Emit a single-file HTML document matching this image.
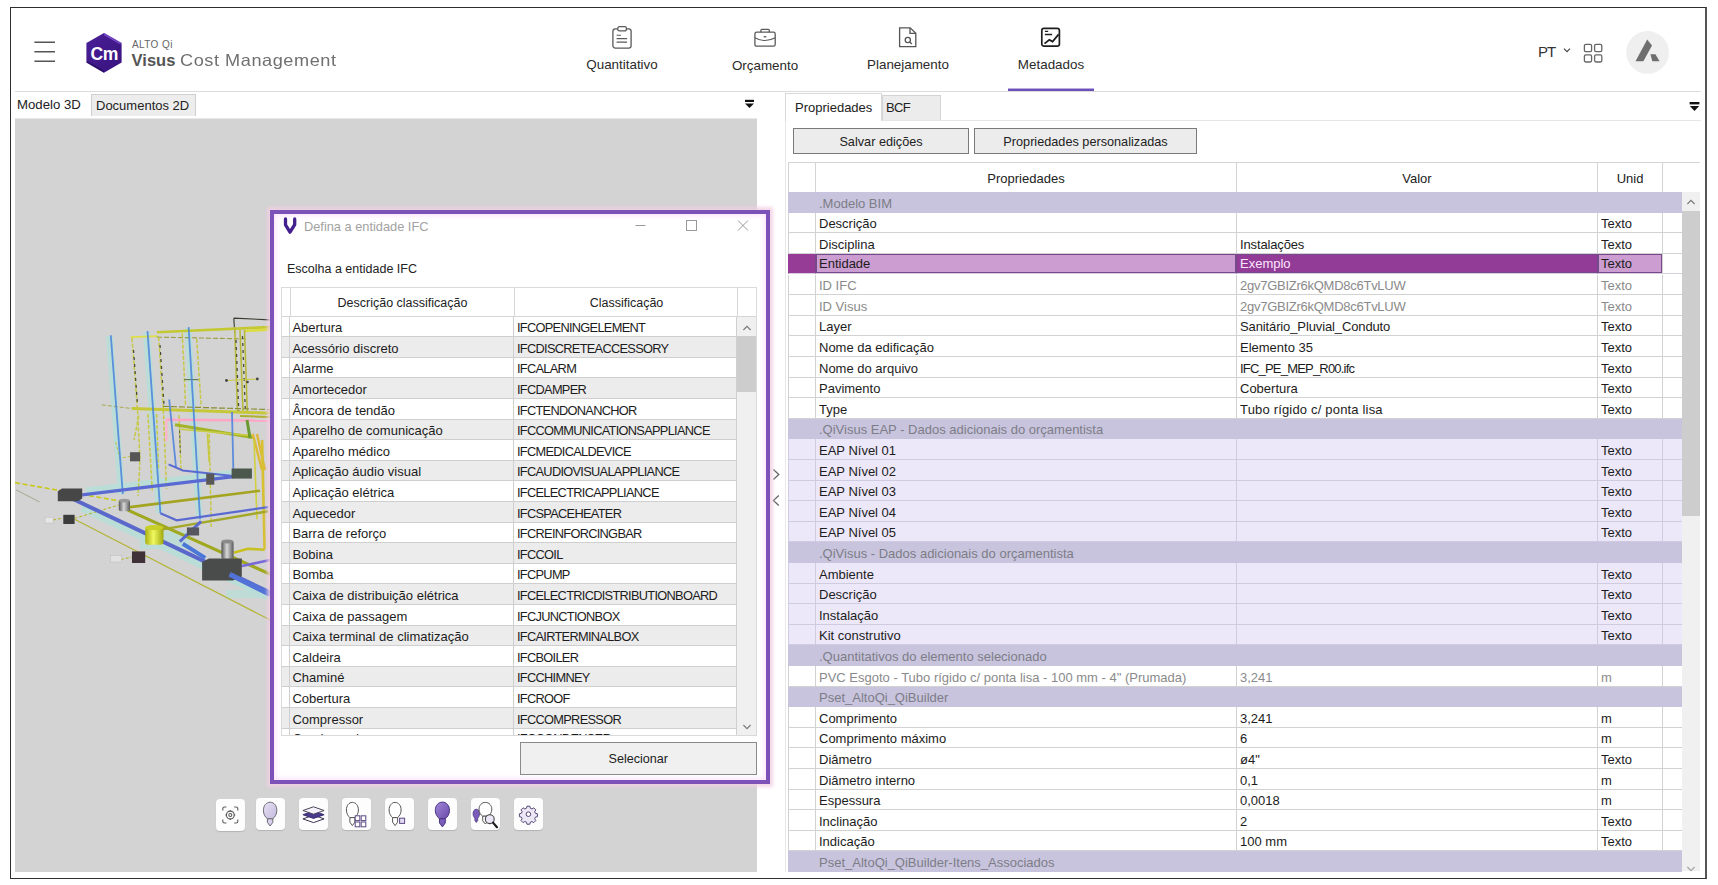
<!DOCTYPE html>
<html><head><meta charset="utf-8"><title>Visus Cost Management</title>
<style>
html,body{margin:0;padding:0;background:#fff}
body{width:1718px;height:885px;position:relative;overflow:hidden;font-family:"Liberation Sans",sans-serif;font-size:13px;color:#1c1c1c}
i{font-style:normal}
.a{position:absolute}
#frame{position:absolute;left:10px;top:7px;width:1697px;height:872px;border:1px solid #2e2e2e;border-right:2px solid #555;box-sizing:border-box;z-index:50}
/* header */
#hdrline{position:absolute;left:15px;top:91px;width:1686px;height:1px;background:#dcdcdc}
.hb{position:absolute;left:34px;width:21px;height:2px;background:#5a5a5a}
.nav{position:absolute;top:56px;height:18px;line-height:18px;font-size:13.4px;color:#2a2a2a;text-align:center;white-space:nowrap}
#navul{position:absolute;left:1008px;top:88px;width:86px;height:3px;background:linear-gradient(#b9addf 0,#b9addf 1px,#6a50b8 1px)}
/* left */
.tabtxt{position:absolute;white-space:nowrap;line-height:20px;font-size:13.2px;color:#222}
#tab2d{position:absolute;left:91px;top:94px;width:105px;height:22px;box-sizing:border-box;background:#ededed;border:1px solid #cfcfcf;border-bottom:none}
#viewer{position:absolute;left:15px;top:119px;width:742px;height:753px;box-shadow:0 -1px 0 #e9e9e9;background:#d3d3d3;overflow:hidden}
.tb{position:absolute;width:29px;height:32px;border-radius:4px;background:#fdfdfd;box-shadow:0 1px 1px rgba(0,0,0,.15)}
/* right panel */
#rpanel{position:absolute;left:0;top:0}
.btn{position:absolute;top:128px;height:26px;box-sizing:border-box;background:#ececec;border:1px solid #7a7a7a;text-align:center;line-height:27px;font-size:12.700px;color:#222;white-space:nowrap}
#ghead{position:absolute;left:788px;top:162px;width:912px;height:30px;border-top:1px solid #d4d4d4;box-sizing:border-box}
#ghead i{position:absolute;top:0;height:29px;line-height:31px;text-align:center;border-left:1px solid #d4d4d4;box-sizing:border-box;font-size:13px;color:#222}
#pgrid{position:absolute;left:0;top:0}
.r{position:absolute;left:788px;width:894px;white-space:nowrap;overflow:hidden}
.r i{position:absolute;top:0;bottom:0;box-sizing:border-box;border-left:1px solid #d2d2d2;border-bottom:1px solid #d2d2d2;padding-left:3px;overflow:hidden}
.r .c0{left:0;width:27px}
.r .c1{left:27px;width:421px}
.r .c2{left:448px;width:361px}
.r .c3{left:809px;width:65px}
.r .c4{left:874px;width:20px}
.r.g{background:#c8c4de;color:#7d7d86}
.r.g i{border-color:transparent}
.r.p i{background:#ece8f9;border-color:#cfcbe0}
.r.d{color:#8a8a8a}
/* dialog */
#dlg{position:absolute;left:270px;top:210px;width:500px;height:574px;box-sizing:border-box;border:4px solid #7c52b8;background:#fff;z-index:10;box-shadow:0 0 3px 3px rgba(240,208,228,.8),inset 0 0 5px 2px rgba(252,226,252,.9)}
#dgrid{position:absolute;left:7px;top:73px;width:476px;height:449px;overflow:hidden;border:1px solid #dadada;box-sizing:border-box;background:#fff}
.dr{position:absolute;left:0;width:456px;white-space:nowrap}
.dr i{position:absolute;top:0;bottom:0;box-sizing:border-box;border-left:1px solid #cfcfcf;border-bottom:1px solid #cfcfcf;overflow:hidden}
.dr .d0{left:0;width:7.4px;border-left:none}
.dr .d1{left:7.4px;width:224px;padding-left:2px}
.dr .d2{left:231.400px;width:224px;padding-left:2.600px;letter-spacing:-.7px;font-size:12.800px;border-right:1px solid #cfcfcf}
.dr.e i{background:#ececec}
#dhead{position:absolute;left:0;top:0;width:474px;height:28px;border-bottom:1px solid #d6d6d6}
#dhead i{position:absolute;top:0;height:28px;line-height:31px;text-align:center;border-left:1px solid #d6d6d6;box-sizing:border-box;font-size:12.500px;color:#222}
.r.s i{bottom:1px;line-height:20px;border-bottom-color:#d6cfe0}
.r.s .c0{background:#963c96;border-left-color:#963c96}
.r.s .c1{background:#cb9dd0;border-left-color:#76488c;box-shadow:inset 0 0 0 1px #76488c}
.r.s .c2{background:#923c98;color:#fde6fd;border-left-color:#76488c;box-shadow:inset 0 1px 0 #76488c,inset 0 -1px 0 #76488c}
.r.s .c3{background:#cb9dd0;border-left-color:#76488c;box-shadow:inset 0 0 0 1px #76488c}

</style></head>
<body>
<div id="frame"></div>
<div id="hdr">
<svg class="a" style="left:33px;top:38px" width="24" height="28" viewBox="0 0 24 28" stroke="#555" stroke-width="1.500"><path d="M1.400 4.200h20.600M1.400 13.700h20.600M1.400 23.200h20.600"/></svg>
<svg class="a" style="left:84px;top:30px" width="42" height="46" viewBox="0 0 42 46">
<defs><linearGradient id="hg" x1="0" y1="0" x2="1" y2="1"><stop offset="0" stop-color="#4c2099"/><stop offset="1" stop-color="#36127c"/></linearGradient></defs>
<path d="M20 3 L37.600 13 L37.600 32.600 L20 42.800 L2.400 32.600 L2.400 13 Z" fill="url(#hg)"/>
<path d="M20 3 L37.600 13 L36.300 14.400 L20 5.200Z" fill="#7a4ccc" opacity=".85"/>
<path d="M2.400 32.600 L20 42.800 L20 40.600 L3.700 31.200Z" fill="#220a5c" opacity=".7"/>
<text x="20.200" y="29.600" text-anchor="middle" font-family="Liberation Sans, sans-serif" font-weight="bold" font-size="17.600" fill="#fff" letter-spacing="-.4">Cm</text>
</svg>
<div class="a" style="left:132px;top:39px;font-size:10px;line-height:12px;color:#666;letter-spacing:.4px;white-space:nowrap">ALTO Qi</div>
<div class="a" id="brand" style="left:131.600px;top:50px;font-size:16.500px;line-height:20px;color:#555;white-space:nowrap"><b id="brandb">Visus</b></div>
<div class="a" id="brand2" style="left:180px;top:50px;font-size:16.500px;line-height:20px;color:#707070;white-space:nowrap;letter-spacing:.5px;transform:scaleX(1.1);transform-origin:0 0">Cost Management</div>

<svg class="a" style="left:610px;top:24px" width="24" height="27" viewBox="0 0 24 27" fill="none" stroke="#5a5a5a" stroke-width="1.300"><rect x="2.900" y="4.900" width="18.200" height="19.200" rx="2.400"/><rect x="7.800" y="2.700" width="8.600" height="4.200" rx="1.600" fill="#fff"/><path d="M6.600 11.300h4.400M6.600 14.600h10.500M6.600 18.100h10.500" stroke-width="1.100"/></svg>
<div class="nav" style="left:572px;width:100px">Quantitativo</div>

<svg class="a" style="left:752px;top:26px" width="26" height="23" viewBox="0 0 26 23" fill="none" stroke="#5a5a5a" stroke-width="1.300"><rect x="2.900" y="6.200" width="20.300" height="14" rx="1.800"/><path d="M8.900 6.200V4.300q0-.9.900-.9h6.600q.9 0 .9.900v1.900"/><path d="M2.900 11.700Q13 17.300 23.200 11.700" stroke-width="1.100"/><rect x="11.700" y="10.100" width="2.600" height="1.300" fill="#555" stroke="none"/></svg>
<div class="nav" style="left:715px;width:100px;top:57px">Orçamento</div>

<svg class="a" style="left:897px;top:25px" width="22" height="24" viewBox="0 0 22 24" fill="none" stroke="#555" stroke-width="1.3">
<path d="M2.6 2.8h10.6l5.6 5.4v13.4H2.6z"/><path d="M13 3v5.4h5.6"/><circle cx="10.8" cy="15" r="2.6"/><path d="M12.8 17l2 2"/></svg>
<div class="nav" style="left:858px;width:100px">Planejamento</div>

<svg class="a" style="left:1039px;top:25px" width="24" height="24" viewBox="0 0 24 24" fill="none" stroke="#1e1e1e" stroke-width="1.700"><rect x="2.800" y="3.300" width="17.600" height="17.800" rx="2.200"/><path d="M5.900 6.400h3.300M5.900 9.500h7.200" stroke-width="1.400"/><path d="M5.500 18.600l4.800-3.700 3.300 1.700 6-7.200" stroke-width="1.800"/></svg>
<div class="nav" style="left:1001px;width:100px">Metadados</div>
<div id="navul"></div>

<div class="a" style="left:1538px;top:43px;font-size:15px;line-height:18px;color:#333;letter-spacing:-1px">PT</div>
<svg class="a" style="left:1562px;top:46px" width="10" height="8" viewBox="0 0 10 8" fill="none" stroke="#444" stroke-width="1.2"><path d="M2 2.6l3 3 3-3"/></svg>
<svg class="a" style="left:1583px;top:43px" width="21" height="21" viewBox="0 0 21 21" fill="none" stroke="#666" stroke-width="1.3">
<rect x="1.4" y="1.4" width="7.2" height="7.2" rx="1.4"/><rect x="11.6" y="1.4" width="7.2" height="7.2" rx="1.4"/><rect x="1.4" y="11.8" width="7.2" height="7.2" rx="1.4"/><rect x="11.6" y="11.8" width="7.2" height="7.2" rx="1.4"/></svg>
<svg class="a" style="left:1626px;top:30px" width="44" height="44" viewBox="0 0 44 44">
<circle cx="21.6" cy="22.4" r="21.4" fill="#efefef"/>
<path d="M21.2 9.4L9.5 31.3h7.9L26 15.5z" fill="#6e6e6e"/><path d="M24.4 24.3h5l4.2 7h-7.3z" fill="#6e6e6e"/></svg>
<div id="hdrline"></div>
</div>
<div id="left">
<div class="tabtxt" style="left:17px;top:95px">Modelo 3D</div>
<div id="tab2d"></div><div class="tabtxt" style="left:96px;top:96px;font-size:13px">Documentos 2D</div>
<svg class="a" style="left:744px;top:99px" width="11" height="10" viewBox="0 0 11 10"><rect x="1" y="0.8" width="9" height="2.2" fill="#111"/><path d="M1 4.4h9L5.5 9z" fill="#111"/></svg>
<div id="viewer">
<svg class="a" style="left:0;top:0;filter:blur(.45px)" width="742" height="753" viewBox="15 119 742 753">
<defs>
<linearGradient id="cg" x1="0" y1="0" x2="1" y2="0"><stop offset="0" stop-color="#555"/><stop offset=".45" stop-color="#d8d8d8"/><stop offset="1" stop-color="#5a5a5a"/></linearGradient>
<linearGradient id="cy" x1="0" y1="0" x2="1" y2="0"><stop offset="0" stop-color="#a8b010"/><stop offset=".45" stop-color="#f0f860"/><stop offset="1" stop-color="#a0a810"/></linearGradient>
</defs>
<!-- faint cyan halos -->
<g stroke="#a6e6dc" stroke-width="7" opacity=".55" fill="none">
<path d="M109.500 336L121.500 494M146.500 332L159.500 513M188 328L199.500 519"/>
<path d="M86 491L236 473M82 508L268 597"/><path d="M140 531h50v18h-50zM226 590h44v8h-44z" stroke="none" fill="#a6e6dc" opacity=".8"/>
</g>
<!-- upper yellow structure -->
<g fill="none" stroke-linecap="butt">
<path d="M233.800 318.100L269.500 319.900M233.800 318.100L234.700 333" stroke="#3a3a30" stroke-width="1.1"/>
<path d="M156.900 332.200L270 327.100" stroke="#c4c832" stroke-width="2.6"/>
<path d="M130.700 337.100L157.800 336.200" stroke="#dede48" stroke-width="1.8"/>
<path d="M156.900 337.100L245.500 338.900" stroke="#9c9c40" stroke-width="1.1" stroke-dasharray="5 2"/>
<path d="M245 331L270 329.500" stroke="#dcdc40" stroke-width="2.600"/>
<g stroke="#c6c846" stroke-width="1.5" stroke-dasharray="4 1.600">
<path d="M132 338L137.400 408.500L140 460L138 496"/>
<path d="M158.700 337.100L163.200 406.700L166.500 489"/>
<path d="M182.200 333.500L184 368.700L185.500 406"/>
<path d="M196.700 338.900L201.200 406.700"/>
<path d="M147.900 413.900L152.300 491"/>
<path d="M209.200 434L211.300 527"/>
<path d="M138.800 415.700L134 440"/><path d="M179 415L181 470"/><path d="M156.600 414L158.500 470"/>
</g>
<g stroke="#b8ba3c" stroke-width="1.600">
<path d="M234.700 327L237.500 412M240 330L243 412M244.500 330L247.300 412"/>
</g>
<g stroke="#4a4a38" stroke-width="1.300" stroke-dasharray="3 4">
<path d="M236 340L238.800 412M242.500 336L245.300 410M160 345L164 405M133.500 350L137.500 405"/>
</g>
<path d="M226.500 380.500L257.300 379" stroke="#c8c840" stroke-width="1.200"/>
<circle cx="226.500" cy="380.500" r="1.400" fill="#444"/><circle cx="257.300" cy="379" r="1.400" fill="#444"/><circle cx="247.500" cy="382" r="1.300" fill="#444"/>
<path d="M184 379.600L198.500 379.600" stroke="#5a7a4a" stroke-width="1.100"/>
<!-- mid band -->
<path d="M101.800 404.900L131.600 408.500" stroke="#a8a850" stroke-width="1" stroke-dasharray="4 2"/>
<path d="M131.600 408.600L270 413.200" stroke="#c6c838" stroke-width="3"/>
<path d="M163 406.300L270 409.600" stroke="#8c8c34" stroke-width="1.200" stroke-dasharray="6 2"/>
<path d="M240 416L270 417" stroke="#b0b030" stroke-width="2"/>
<path d="M166 419.800L270 420.600" stroke="#ffa6c6" stroke-width="2.600"/>
<path d="M166.300 419L166.300 441" stroke="#ffb0cc" stroke-width="2"/>
<path d="M175 424.800L252.700 437.400" stroke="#a4b426" stroke-width="3"/>
<path d="M180.400 429.300L252.700 435.600" stroke="#c8cc40" stroke-width="1.600"/>
<path d="M207.500 433.800L209.300 462" stroke="#c8c840" stroke-width="1.800"/>
<path d="M179.500 430.200L180.400 453.700" stroke="#666640" stroke-width="1.100" stroke-dasharray="3 2"/>
<path d="M252.700 433.800L262 470M257 434L265 470" stroke="#dcb838" stroke-width="2.400"/>
<path d="M247 420L250 438" stroke="#6a9a30" stroke-width="3"/>
<!-- lower yellow -->
<path d="M254 440L257 519.300" stroke="#d0d040" stroke-width="1.600"/>
<path d="M262.100 440L264.600 549" stroke="#d8c030" stroke-width="2.600"/>
<path d="M233.600 552.800L247.900 548.800L264.800 549.800" stroke="#c8c020" stroke-width="2.600"/>
<path d="M115.700 442L119.800 458.300L130 456.300" stroke="#c0c040" stroke-width="1" stroke-dasharray="3 2"/>
<path d="M15.100 482.700L119.800 501" stroke="#c8c820" stroke-width="1.700" stroke-dasharray="5 2.500"/>
<path d="M16.100 489.800L39.500 502" stroke="#9a9a80" stroke-width=".8"/>
<path d="M53 520L63 518M74.600 518.300L118.800 505M121 559.500L132 557" stroke="#b8b830" stroke-width="1.100" stroke-dasharray="3 2"/>
<path d="M74.600 519.300L270.200 620" stroke="#b4b436" stroke-width="1.200"/>
<path d="M130 507.100L260 490.800" stroke="#a4a420" stroke-width="2.600"/>
<path d="M162.500 529.400L268.200 511.200" stroke="#a4a828" stroke-width="2.400"/>
<path d="M127.900 510.100L270.200 574.200" stroke="#a0a820" stroke-width="3.200"/>
<!-- blue -->
<g stroke="#4a80dc" stroke-width="1.800" opacity=".85">
<path d="M110.800 335.300L122.800 494"/>
<path d="M147.500 331.100L160.400 513.200"/>
<path d="M188.600 327.100L200.100 519.300"/>
<path d="M169.200 399.500L176 467"/>
<path d="M232 412L233.500 476"/>
</g>
<g stroke="#5a6ad2">
<path d="M168.600 464.400L182.800 470.500L233 476" stroke-width="2"/>
<path d="M160.400 513.200L176.700 520.300L268.200 507.100" stroke-width="2.200"/>
<path d="M82.200 494.900L233.600 476.600" stroke-width="3.200"/>
<path d="M179.800 541.600L201.100 521.300" stroke-width="3"/>
<path d="M241.800 566L270.200 560" stroke-width="2.600" stroke="#7a6ad8"/>
</g>
<path d="M73 499L270.200 592.500" stroke="#5a68cc" stroke-width="4"/>
<path d="M182.800 543.700L205.200 557.900" stroke="#4a78d8" stroke-width="4"/>
</g>
<!-- boxes & cylinders -->
<path d="M57.800 491.200L62 488.600L82.200 488.600L82.200 498.500L78 501.200L57.800 501.200Z" fill="#474747"/>
<rect x="63.300" y="514.800" width="11.300" height="9.200" fill="#3c3c3c"/>
<rect x="45" y="517.300" width="8.100" height="5.700" fill="#e6e6e6" stroke="#bbb" stroke-width=".5"/>
<rect x="132" y="551.400" width="13.200" height="11.600" fill="#403038"/>
<rect x="110.600" y="555.500" width="10.800" height="6.500" fill="#e2e2e2" stroke="#bbb" stroke-width=".5"/>
<rect x="130" y="452.200" width="10.100" height="9.100" fill="#565656"/>
<rect x="206.200" y="473.500" width="8.100" height="11.200" fill="#585858"/>
<rect x="231.600" y="468.500" width="20.300" height="10.100" fill="#4c584c"/>
<rect x="186.900" y="527.400" width="12.200" height="8.100" fill="#565660"/>
<rect x="118.800" y="500" width="11.200" height="11.200" rx="2" fill="url(#cg)"/>
<ellipse cx="124.400" cy="500.600" rx="5.600" ry="1.800" fill="#9a9a9a"/>
<rect x="145.200" y="527" width="18.300" height="17.700" rx="3" fill="url(#cy)"/>
<ellipse cx="154.300" cy="527.600" rx="9.100" ry="2.600" fill="#c8d028"/>
<rect x="221.400" y="541" width="12.200" height="18" rx="2" fill="url(#cg)"/>
<ellipse cx="227.500" cy="541.400" rx="6.100" ry="2" fill="#8a8a8a"/>
<path d="M202.100 562L209 558.600L241.800 558.600L241.800 576.500L233 580.500L202.100 580.500Z" fill="#4a4c4c"/>
<path d="M229.600 574.200L270.200 594.500" stroke="#5272d8" stroke-width="5" fill="none"/>
</svg>

</div>
<div id="toolbar">
<div class="tb" style="left:216px;top:799px"><svg width="29" height="32" viewBox="0 0 29 32" fill="none" stroke="#5a5a5a" stroke-width="1.100"><path d="M6.800 11.600V9.800q0-1.800 1.800-1.800h1.800M18.200 8h1.800q1.800 0 1.800 1.800v1.800M21.800 20.400v1.800q0 1.800-1.800 1.800h-1.800M10.400 24h-1.800q-1.800 0-1.800-1.800v-1.800"/><circle cx="14.300" cy="16" r="3.900"/><circle cx="14.300" cy="16" r="1.500"/><path d="M14.300 11v1.300M14.300 19.700v1.300M9.300 16h1.300M18 16h1.300"/></svg></div>
<div class="tb" style="left:256px;top:798px"><svg width="29" height="32" viewBox="0 0 29 32"><defs><linearGradient id="lb" x1="0" y1="0" x2="1" y2="1"><stop offset="0" stop-color="#e6e0f4"/><stop offset="1" stop-color="#c4bade"/></linearGradient></defs><path d="M14.100 4.200c4 0 6.700 3.600 6.700 8.200 0 3.800-2 7-4 8.400h-5.400c-2-1.400-4-4.600-4-8.400 0-4.600 2.700-8.200 6.700-8.200z" fill="url(#lb)" stroke="#6a6a72" stroke-width="1"/><path d="M11.400 20.800h5.400v3.600l-2.700 3.600-2.700-3.600z" fill="#d8d0ec" stroke="#6a6a72" stroke-width="1"/></svg></div>
<div class="tb" style="left:299px;top:798px"><svg width="29" height="32" viewBox="0 0 29 32"><path d="M14.500 17.200l10.600 3.700-10.600 3.700-10.600-3.700z" fill="#fff" stroke="#3c3452" stroke-width="1"/><path d="M14.500 13l10.600 3.700-10.600 3.700-10.600-3.700z" fill="#4a3a8c" stroke="#3a2c70" stroke-width="1"/><path d="M14.500 8.800l10.600 3.700-10.600 3.700-10.600-3.700z" fill="#f4f2fa" stroke="#4a4658" stroke-width="1"/></svg></div>
<div class="tb" style="left:342px;top:798px"><svg width="29" height="32" viewBox="0 -0.8 29 32"><path d="M10.400 3.600c3.500 0 6 3.300 6 7.600 0 3.400-1.700 6.200-3.500 7.600h-5c-1.800-1.400-3.500-4.200-3.500-7.600 0-4.300 2.500-7.600 6-7.600z" fill="#fff" stroke="#555" stroke-width="1"/><path d="M7.900 18.800h5v4.600l-2.500 3.400-2.500-3.400z" fill="#fff" stroke="#555" stroke-width="1"/><g fill="#fff" stroke="#5c4a84" stroke-width="1"><rect x="13.200" y="17" width="4.600" height="4.800"/><rect x="19.200" y="17" width="4.600" height="4.800"/><rect x="13.200" y="23.200" width="4.600" height="4.800"/><rect x="19.200" y="23.200" width="4.600" height="4.800"/></g></svg></div>
<div class="tb" style="left:385px;top:798px"><svg width="29" height="32" viewBox="0 -0.8 29 32"><path d="M10.100 3.600c3.500 0 6 3.300 6 7.600 0 3.400-1.700 6.200-3.500 7.600h-5c-1.800-1.400-3.500-4.200-3.500-7.600 0-4.300 2.500-7.600 6-7.600z" fill="#fff" stroke="#555" stroke-width="1"/><path d="M7.600 18.800h5v4.600l-2.500 3.400-2.500-3.400z" fill="#fff" stroke="#555" stroke-width="1"/><rect x="14.600" y="19.400" width="5" height="5.200" fill="#e4dcf4" stroke="#5c4a84" stroke-width="1"/></svg></div>
<div class="tb" style="left:428px;top:798px"><svg width="29" height="32" viewBox="0.2 -0.7 29 32"><defs><linearGradient id="pb" x1="0" y1="0" x2="1" y2="1"><stop offset="0" stop-color="#a088d8"/><stop offset="1" stop-color="#6a4aaa"/></linearGradient></defs><path d="M14.600 3.400c4.200 0 7.100 3.600 7.100 8.200 0 3.800-2.100 7-4.200 8.400h-5.800c-2.100-1.400-4.200-4.600-4.200-8.400 0-4.600 2.900-8.200 7.100-8.200z" fill="url(#pb)" stroke="#4a3480" stroke-width="1"/><path d="M11.700 20h5.800v4.200l-2.900 4-2.900-4z" fill="#7a5cba" stroke="#4a3480" stroke-width="1"/></svg></div>
<div class="tb" style="left:471px;top:798px"><svg width="29" height="32" viewBox="0 -1.4 29 32"><path d="M5.300 9.800c1.900 0 3.200 2 3.200 4.600 0 2-1 3.600-1.800 4.400v2.400l-1.400 1.800-1.400-1.800v-2.400c-.8-.8-1.800-2.400-1.800-4.400 0-2.600 1.300-4.600 3.200-4.600z" fill="#7a5cba" stroke="#4a3480" stroke-width=".8"/><path d="M14.400 3c3.700 0 6.400 3 6.400 6.800 0 3.200-1.800 5.800-3.700 7h-5.400c-1.900-1.200-3.700-3.800-3.700-7 0-3.800 2.700-6.800 6.400-6.800z" fill="#fff" stroke="#555" stroke-width="1"/><path d="M11.700 16.800h5.400v4.600l-2.700 3.200-2.700-3.200z" fill="#fff" stroke="#555" stroke-width="1"/><circle cx="18.800" cy="19.800" r="4.400" fill="#ece6f8" stroke="#444" stroke-width="1.100"/><path d="M22 23.200l4 4.600" stroke="#1c1c1c" stroke-width="2.200" stroke-linecap="round"/></svg></div>
<div class="tb" style="left:514px;top:798px"><svg width="29" height="32" viewBox="0 0 29 32"><g transform="translate(14.400 16.200) scale(.85)"><path d="M-1.700-9.400h3.400l.6 2.400 1.900.8 2.100-1.300 2.400 2.400-1.300 2.100.8 1.900 2.400.6v3.400l-2.400.6-.8 1.900 1.300 2.100-2.400 2.400-2.100-1.300-1.900.8-.6 2.400h-3.400l-.6-2.400-1.900-.8-2.100 1.300-2.400-2.400 1.300-2.100-.8-1.900-2.400-.6v-3.400l2.400-.6.8-1.900-1.300-2.100 2.400-2.400 2.100 1.300 1.900-.8z" fill="#ece8f6" stroke="#4a3c6c" stroke-width="1.100" stroke-linejoin="round"/><circle r="2.700" fill="#fff" stroke="#4a3c6c" stroke-width="1.100"/></g></svg></div>
</div>

<svg class="a" style="left:771px;top:467px" width="10" height="42" viewBox="0 0 10 42" fill="none" stroke="#666" stroke-width="1.3"><path d="M2.4 2.6l5.4 5-5.4 5"/><path d="M7.8 28.6l-5.4 5 5.4 5"/></svg>
</div>
<div id="rpanel">
<div class="a" style="left:785px;top:120px;width:1px;height:752px;background:#e8e8e8"></div>
<div class="a" style="left:785px;top:120px;width:916px;height:1px;background:#e6e6e6"></div>
<div class="a" style="left:785px;top:93px;width:97px;height:28px;box-sizing:border-box;border:1px solid #d9d9d9;border-bottom:none;background:#fff"></div>
<div class="tabtxt" style="left:795px;top:97.600px;font-size:13px">Propriedades</div>
<div class="a" style="left:882px;top:95px;width:59px;height:25px;box-sizing:border-box;border:1px solid #d4d4d4;border-bottom:none;background:#ececec"></div>
<div class="tabtxt" style="left:886px;top:97.600px;font-size:13px;letter-spacing:-.6px">BCF</div>
<svg class="a" style="left:1689px;top:101px" width="11" height="11" viewBox="0 0 11 11"><rect x="0.6" y="1" width="9.8" height="2.4" fill="#111"/><path d="M0.8 5h9.4L5.5 10z" fill="#111"/></svg>
<div class="btn" style="left:793px;width:176px">Salvar edições</div>
<div class="btn" style="left:974px;width:223px">Propriedades personalizadas</div>
<div id="ghead"><i style="left:0;width:27px"></i><i style="left:27px;width:421px">Propriedades</i><i style="left:448px;width:361px">Valor</i><i style="left:809px;width:65px">Unid</i><i style="left:874px;width:20px"></i></div>
<div id="pgrid">
<div class="r g" style="top:192px;height:21px;line-height:23px"><i class="c0"></i><i class="c1">.Modelo BIM</i><i class="c2"></i><i class="c3"></i><i class="c4"></i></div>
<div class="r n" style="top:213px;height:20px;line-height:22px"><i class="c0"></i><i class="c1">Descrição</i><i class="c2"></i><i class="c3">Texto</i><i class="c4"></i></div>
<div class="r n" style="top:233px;height:21px;line-height:23px"><i class="c0"></i><i class="c1">Disciplina</i><i class="c2" style="letter-spacing:-0.14px">Instalações</i><i class="c3">Texto</i><i class="c4"></i></div>
<div class="r s" style="top:254px;height:21px;line-height:23px"><i class="c0"></i><i class="c1">Entidade</i><i class="c2">Exemplo</i><i class="c3">Texto</i><i class="c4"></i></div>
<div class="r d" style="top:275px;height:20px;line-height:22px"><i class="c0"></i><i class="c1">ID IFC</i><i class="c2" style="letter-spacing:-0.26px">2gv7GBIZr6kQMD8c6TvLUW</i><i class="c3">Texto</i><i class="c4"></i></div>
<div class="r d" style="top:295px;height:21px;line-height:23px"><i class="c0"></i><i class="c1">ID Visus</i><i class="c2" style="letter-spacing:-0.26px">2gv7GBIZr6kQMD8c6TvLUW</i><i class="c3">Texto</i><i class="c4"></i></div>
<div class="r n" style="top:316px;height:20px;line-height:22px"><i class="c0"></i><i class="c1">Layer</i><i class="c2" style="letter-spacing:-0.12px">Sanitário_Pluvial_Conduto</i><i class="c3">Texto</i><i class="c4"></i></div>
<div class="r n" style="top:336px;height:21px;line-height:23px"><i class="c0"></i><i class="c1">Nome da edificação</i><i class="c2">Elemento 35</i><i class="c3">Texto</i><i class="c4"></i></div>
<div class="r n" style="top:357px;height:21px;line-height:23px"><i class="c0"></i><i class="c1">Nome do arquivo</i><i class="c2" style="letter-spacing:-0.8px">IFC_PE_MEP_R00.ifc</i><i class="c3">Texto</i><i class="c4"></i></div>
<div class="r n" style="top:378px;height:20px;line-height:22px"><i class="c0"></i><i class="c1">Pavimento</i><i class="c2">Cobertura</i><i class="c3">Texto</i><i class="c4"></i></div>
<div class="r n" style="top:398px;height:21px;line-height:23px"><i class="c0"></i><i class="c1">Type</i><i class="c2" style="letter-spacing:0.18px">Tubo rígido c/ ponta lisa</i><i class="c3">Texto</i><i class="c4"></i></div>
<div class="r g" style="top:419px;height:20px;line-height:22px"><i class="c0"></i><i class="c1">.QiVisus EAP - Dados adicionais do orçamentista</i><i class="c2"></i><i class="c3"></i><i class="c4"></i></div>
<div class="r p" style="top:439px;height:21px;line-height:23px"><i class="c0"></i><i class="c1">EAP Nível 01</i><i class="c2"></i><i class="c3">Texto</i><i class="c4"></i></div>
<div class="r p" style="top:460px;height:21px;line-height:23px"><i class="c0"></i><i class="c1">EAP Nível 02</i><i class="c2"></i><i class="c3">Texto</i><i class="c4"></i></div>
<div class="r p" style="top:481px;height:20px;line-height:22px"><i class="c0"></i><i class="c1">EAP Nível 03</i><i class="c2"></i><i class="c3">Texto</i><i class="c4"></i></div>
<div class="r p" style="top:501px;height:21px;line-height:23px"><i class="c0"></i><i class="c1">EAP Nível 04</i><i class="c2"></i><i class="c3">Texto</i><i class="c4"></i></div>
<div class="r p" style="top:522px;height:20px;line-height:22px"><i class="c0"></i><i class="c1">EAP Nível 05</i><i class="c2"></i><i class="c3">Texto</i><i class="c4"></i></div>
<div class="r g" style="top:542px;height:21px;line-height:23px"><i class="c0"></i><i class="c1">.QiVisus - Dados adicionais do orçamentista</i><i class="c2"></i><i class="c3"></i><i class="c4"></i></div>
<div class="r p" style="top:563px;height:21px;line-height:23px"><i class="c0"></i><i class="c1">Ambiente</i><i class="c2"></i><i class="c3">Texto</i><i class="c4"></i></div>
<div class="r p" style="top:584px;height:20px;line-height:22px"><i class="c0"></i><i class="c1">Descrição</i><i class="c2"></i><i class="c3">Texto</i><i class="c4"></i></div>
<div class="r p" style="top:604px;height:21px;line-height:23px"><i class="c0"></i><i class="c1">Instalação</i><i class="c2"></i><i class="c3">Texto</i><i class="c4"></i></div>
<div class="r p" style="top:625px;height:20px;line-height:22px"><i class="c0"></i><i class="c1">Kit construtivo</i><i class="c2"></i><i class="c3">Texto</i><i class="c4"></i></div>
<div class="r g" style="top:645px;height:21px;line-height:23px"><i class="c0"></i><i class="c1">.Quantitativos do elemento selecionado</i><i class="c2"></i><i class="c3"></i><i class="c4"></i></div>
<div class="r d" style="top:666px;height:21px;line-height:23px"><i class="c0"></i><i class="c1">PVC Esgoto - Tubo rígido c/ ponta lisa - 100 mm - 4" (Prumada)</i><i class="c2">3,241</i><i class="c3">m</i><i class="c4"></i></div>
<div class="r g" style="top:687px;height:20px;line-height:22px"><i class="c0"></i><i class="c1">Pset_AltoQi_QiBuilder</i><i class="c2"></i><i class="c3"></i><i class="c4"></i></div>
<div class="r n" style="top:707px;height:21px;line-height:23px"><i class="c0"></i><i class="c1">Comprimento</i><i class="c2">3,241</i><i class="c3">m</i><i class="c4"></i></div>
<div class="r n" style="top:728px;height:20px;line-height:22px"><i class="c0"></i><i class="c1">Comprimento máximo</i><i class="c2">6</i><i class="c3">m</i><i class="c4"></i></div>
<div class="r n" style="top:748px;height:21px;line-height:23px"><i class="c0"></i><i class="c1">Diâmetro</i><i class="c2">ø4"</i><i class="c3">Texto</i><i class="c4"></i></div>
<div class="r n" style="top:769px;height:21px;line-height:23px"><i class="c0"></i><i class="c1">Diâmetro interno</i><i class="c2">0,1</i><i class="c3">m</i><i class="c4"></i></div>
<div class="r n" style="top:790px;height:20px;line-height:22px"><i class="c0"></i><i class="c1">Espessura</i><i class="c2">0,0018</i><i class="c3">m</i><i class="c4"></i></div>
<div class="r n" style="top:810px;height:21px;line-height:23px"><i class="c0"></i><i class="c1">Inclinação</i><i class="c2">2</i><i class="c3">Texto</i><i class="c4"></i></div>
<div class="r n" style="top:831px;height:20px;line-height:22px"><i class="c0"></i><i class="c1">Indicação</i><i class="c2">100 mm</i><i class="c3">Texto</i><i class="c4"></i></div>
<div class="r g" style="top:851px;height:21px;line-height:23px"><i class="c0"></i><i class="c1">Pset_AltoQi_QiBuilder-Itens_Associados</i><i class="c2"></i><i class="c3"></i><i class="c4"></i></div>
</div>
<div class="a" style="left:1682px;top:192px;width:18px;height:679px;background:#f0f0f0"></div>
<div class="a" style="left:1682px;top:211px;width:18px;height:305px;background:#cdcdcd"></div>
<svg class="a" style="left:1686px;top:198px" width="10" height="8" viewBox="0 0 10 8" fill="none" stroke="#777" stroke-width="1.1"><path d="M1.4 6l3.6-3.6L8.6 6"/></svg>
<svg class="a" style="left:1686px;top:865px" width="10" height="7" viewBox="0 0 10 7" fill="none" stroke="#a2a2a2" stroke-width="1.100"><path d="M1.4 2l3.6 3.6L8.6 2"/></svg>
</div>
<div id="dlg">
<svg class="a" style="left:8px;top:3px" width="18" height="18" viewBox="0 0 18 18" fill="none" stroke="#43208e" stroke-width="3.300" stroke-linecap="round" stroke-linejoin="round"><path d="M3.500 1.900V7.800L8 15.200L12.700 7.600V1.900"/></svg>
<div class="a" style="left:30px;top:5px;line-height:16px;font-size:12.800px;color:#a2a2a2;white-space:nowrap">Defina a entidade IFC</div>
<svg class="a" style="left:360px;top:3px" width="120" height="16" viewBox="0 0 120 16" fill="none" stroke="#9a9a9a" stroke-width="1"><path d="M1.500 8.500h10"/><rect x="52.500" y="3.500" width="10" height="10"/><path d="M104 3.500l10 10M114 3.500l-10 10"/></svg>
<div class="a" style="left:13px;top:46.500px;line-height:16px;font-size:12.500px;color:#222;white-space:nowrap">Escolha a entidade IFC</div>
<div id="dgrid">
<div id="dhead"><i style="left:0;width:8px;border-left:none"></i><i style="left:8px;width:224px">Descrição classificação</i><i style="left:232px;width:224px">Classificação</i><i style="left:455.400px;width:19px"></i></div>
<div class="a" style="left:455.400px;top:29px;width:19px;height:420px;background:#f0f0f0"></div>
<div class="a" style="left:455.400px;top:48px;width:19px;height:56px;background:#cdcdcd"></div>
<svg class="a" style="left:460px;top:36px" width="10" height="8" viewBox="0 0 10 8" fill="none" stroke="#777" stroke-width="1.1"><path d="M1.4 6l3.6-3.6L8.6 6"/></svg>
<svg class="a" style="left:460px;top:435px" width="10" height="8" viewBox="0 0 10 8" fill="none" stroke="#777" stroke-width="1.1"><path d="M1.4 2l3.6 3.6L8.6 2"/></svg>
<div class="dr" style="top:29px;height:20px;line-height:22px"><i class="d0"></i><i class="d1">Abertura</i><i class="d2">IFCOPENINGELEMENT</i></div>
<div class="dr e" style="top:49px;height:21px;line-height:23px"><i class="d0"></i><i class="d1">Acessório discreto</i><i class="d2">IFCDISCRETEACCESSORY</i></div>
<div class="dr" style="top:70px;height:20px;line-height:22px"><i class="d0"></i><i class="d1">Alarme</i><i class="d2">IFCALARM</i></div>
<div class="dr e" style="top:90px;height:21px;line-height:23px"><i class="d0"></i><i class="d1">Amortecedor</i><i class="d2">IFCDAMPER</i></div>
<div class="dr" style="top:111px;height:21px;line-height:23px"><i class="d0"></i><i class="d1">Âncora de tendão</i><i class="d2">IFCTENDONANCHOR</i></div>
<div class="dr e" style="top:132px;height:20px;line-height:22px"><i class="d0"></i><i class="d1">Aparelho de comunicação</i><i class="d2">IFCCOMMUNICATIONSAPPLIANCE</i></div>
<div class="dr" style="top:152px;height:21px;line-height:23px"><i class="d0"></i><i class="d1">Aparelho médico</i><i class="d2">IFCMEDICALDEVICE</i></div>
<div class="dr e" style="top:173px;height:20px;line-height:22px"><i class="d0"></i><i class="d1">Aplicação áudio visual</i><i class="d2">IFCAUDIOVISUALAPPLIANCE</i></div>
<div class="dr" style="top:193px;height:21px;line-height:23px"><i class="d0"></i><i class="d1">Aplicação elétrica</i><i class="d2">IFCELECTRICAPPLIANCE</i></div>
<div class="dr e" style="top:214px;height:21px;line-height:23px"><i class="d0"></i><i class="d1">Aquecedor</i><i class="d2">IFCSPACEHEATER</i></div>
<div class="dr" style="top:235px;height:20px;line-height:22px"><i class="d0"></i><i class="d1">Barra de reforço</i><i class="d2">IFCREINFORCINGBAR</i></div>
<div class="dr e" style="top:255px;height:21px;line-height:23px"><i class="d0"></i><i class="d1">Bobina</i><i class="d2">IFCCOIL</i></div>
<div class="dr" style="top:276px;height:20px;line-height:22px"><i class="d0"></i><i class="d1">Bomba</i><i class="d2">IFCPUMP</i></div>
<div class="dr e" style="top:296px;height:21px;line-height:23px"><i class="d0"></i><i class="d1">Caixa de distribuição elétrica</i><i class="d2">IFCELECTRICDISTRIBUTIONBOARD</i></div>
<div class="dr" style="top:317px;height:21px;line-height:23px"><i class="d0"></i><i class="d1">Caixa de passagem</i><i class="d2">IFCJUNCTIONBOX</i></div>
<div class="dr e" style="top:338px;height:20px;line-height:22px"><i class="d0"></i><i class="d1">Caixa terminal de climatização</i><i class="d2">IFCAIRTERMINALBOX</i></div>
<div class="dr" style="top:358px;height:21px;line-height:23px"><i class="d0"></i><i class="d1">Caldeira</i><i class="d2">IFCBOILER</i></div>
<div class="dr e" style="top:379px;height:20px;line-height:22px"><i class="d0"></i><i class="d1">Chaminé</i><i class="d2">IFCCHIMNEY</i></div>
<div class="dr" style="top:399px;height:21px;line-height:23px"><i class="d0"></i><i class="d1">Cobertura</i><i class="d2">IFCROOF</i></div>
<div class="dr e" style="top:420px;height:21px;line-height:23px"><i class="d0"></i><i class="d1">Compressor</i><i class="d2">IFCCOMPRESSOR</i></div>
<div class="dr" style="top:441px;height:20px;line-height:20px"><i class="d0"></i><i class="d1">Condensador</i><i class="d2">IFCCONDENSER</i></div>
</div>
<div class="a" style="left:245.500px;top:528px;width:237.500px;height:33px;box-sizing:border-box;background:#f0f0f0;border:1px solid #8a8a8a;text-align:center;line-height:32px;font-size:12.600px;color:#222">Selecionar</div>
</div>
</body></html>
